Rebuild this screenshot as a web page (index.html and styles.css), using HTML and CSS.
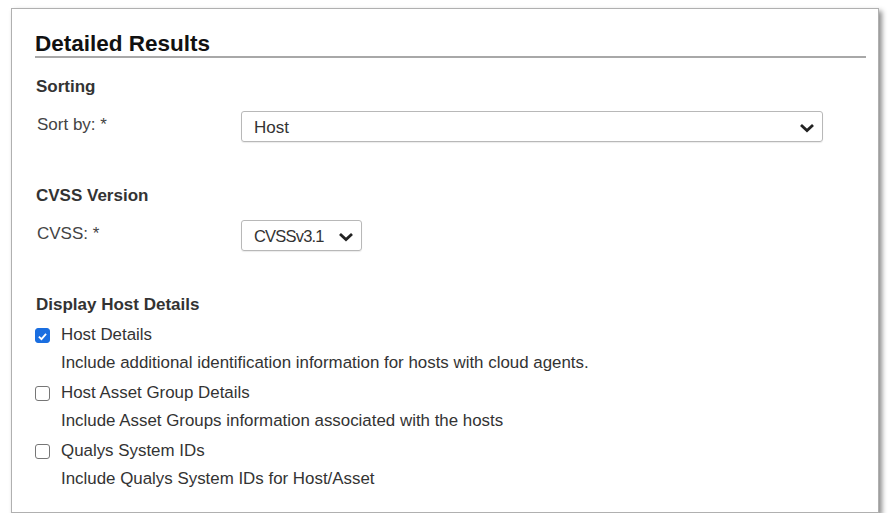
FILE: index.html
```html
<!DOCTYPE html>
<html lang="en">
<head>
  <meta charset="UTF-8" />
  <title>Detailed Results</title>
  <link rel="stylesheet" href="styles.css">
</head>
<body>

  <div class="panel">
    <h2 class="panel-title">Detailed Results</h2>

    <div class="section">
      <div class="section-title">Sorting</div>
      <div class="form-row">
        <label for="sortBy">Sort by: *</label>
        <div class="select-box wide" id="sortBy">
          <span>Host</span>
          <svg class="chevron" viewBox="0 0 16 10" width="16" height="10"><path d="M2 2 L8 7.5 L14 2" fill="none" stroke="#222" stroke-width="2.8"/></svg>
        </div>
      </div>
    </div>

    <div class="section">
      <div class="section-title">CVSS Version</div>
      <div class="form-row">
        <label for="cvss">CVSS: *</label>
        <div class="select-box narrow" id="cvss">
          <span>CVSSv3.1</span>
          <svg class="chevron" viewBox="0 0 16 10" width="16" height="10"><path d="M2 2 L8 7.5 L14 2" fill="none" stroke="#222" stroke-width="2.8"/></svg>
        </div>
      </div>
    </div>

    <div class="section">
      <div class="section-title">Display Host Details</div>

      <div class="check-item">
        <div class="check-row">
          <span class="checkbox checked">
            <svg viewBox="0 0 15 15" width="15" height="15"><path d="M3.3 7.6 L6.3 10.5 L11.6 4.4" fill="none" stroke="#fff" stroke-width="2.1"/></svg>
          </span>
          <span>Host Details</span>
        </div>
        <div class="check-desc">Include additional identification information for hosts with cloud agents.</div>
      </div>

      <div class="check-item">
        <div class="check-row">
          <span class="checkbox"></span>
          <span>Host Asset Group Details</span>
        </div>
        <div class="check-desc">Include Asset Groups information associated with the hosts</div>
      </div>

      <div class="check-item">
        <div class="check-row">
          <span class="checkbox"></span>
          <span>Qualys System IDs</span>
        </div>
        <div class="check-desc">Include Qualys System IDs for Host/Asset</div>
      </div>
    </div>
  </div>

</body>
</html>
```

FILE: styles.css
```css
body {
  margin: 0;
  padding: 8px 0 0 11px;
  background: #fff;
  font-family: 'Liberation Sans', Arial, sans-serif;
  color: #333;
}

.panel {
  width: 868px;
  height: 505px;
  box-sizing: border-box;
  border: 1px solid #b0b0b0;
  background: #fff;
  box-shadow: 3px 3px 5px rgba(0, 0, 0, 0.45);
  padding: 0 12px 0 23px;
}

.panel-title {
  margin: 22px 0 0;
  padding-bottom: 0;
  font-size: 22.5px;
  font-weight: bold;
  color: #111;
  border-bottom: 2px solid #a8a8a8;
  line-height: 25px;
}

.section-title {
  font-size: 17px;
  font-weight: bold;
  color: #333;
  padding-left: 1px;
  line-height: 20px;
  margin-top: 44px;
}

.section:first-of-type .section-title {
  margin-top: 19px;
}

.form-row {
  display: grid;
  grid-template-columns: 206px auto;
  align-items: center;
  margin-top: 14px;
}

.form-row label {
  font-size: 17px;
  color: #444;
  padding-left: 2px;
  padding-bottom: 4px;
  line-height: 20px;
}

.select-box {
  display: flex;
  align-items: center;
  justify-content: space-between;
  height: 31px;
  box-sizing: border-box;
  border: 1px solid #b8b8b8;
  border-radius: 3px;
  padding: 2px 7px 0 12px;
  font-size: 17px;
  color: #333;
  box-shadow: 0 1px 1px rgba(0, 0, 0, 0.08);
}

.select-box.wide {
  width: 582px;
}

.select-box.narrow {
  width: 121px;
  font-size: 16.5px;
  letter-spacing: -0.8px;
}

.chevron {
  flex: none;
}

.check-item {
  margin-top: 10px;
}

.check-item:first-of-type {
  margin-top: 12px;
}

.check-row {
  display: flex;
  align-items: center;
  gap: 11px;
  font-size: 16.9px;
  color: #333;
  line-height: 20px;
}

.checkbox {
  flex: none;
  width: 15px;
  height: 15px;
  box-sizing: border-box;
  border: 1px solid #767676;
  border-radius: 3px;
  background: #fff;
  display: inline-flex;
}

.checkbox.checked {
  background: #1a6ee0;
  border-color: #1a6ee0;
}

.check-desc {
  font-size: 16.9px;
  color: #333;
  padding-left: 26px;
  margin-top: 8px;
  line-height: 20px;
}
```
